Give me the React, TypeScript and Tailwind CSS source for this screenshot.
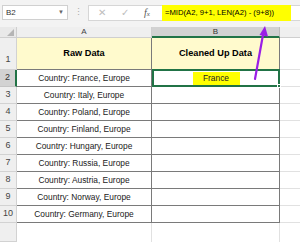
const rows = [
  "Country: France, Europe",
  "Country: Italy, Europe",
  "Country: Poland, Europe",
  "Country: Finland, Europe",
  "Country: Hungary, Europe",
  "Country: Russia, Europe",
  "Country: Austria, Europe",
  "Country: Norway, Europe",
  "Country: Germany, Europe",
];

const font = { fontFamily: '"Liberation Sans", Arial, sans-serif' };

const FormulaBar = () => (
  <div className="h-[27px] bg-[#f3f3f3] flex items-start pt-[5px] relative">
    <div className="ml-[2px] w-[66px] h-[15px] bg-white border border-[#d0d0d0] flex items-center justify-between px-[3px]">
      <span className="text-[8px] text-[#333]">B2</span>
      <span className="text-[6px] text-[#666]">▼</span>
    </div>
    <div className="w-[20px] h-[15px] flex items-center justify-center text-[9px] text-[#aaa]">⋮</div>
    <div className="flex-1 h-[16px] bg-white border-l border-y border-[#d6d6d6] flex items-center">
      <span className="ml-[9px] w-[10px] text-[10px] text-[#bdbdbd] leading-none">✕</span>
      <span className="ml-[13px] w-[10px] text-[10px] text-[#bdbdbd] leading-none">✓</span>
      <span
        className="ml-[13px] text-[10px] italic text-[#555] leading-none"
        style={{ fontFamily: '"Liberation Serif", serif' }}
      >
        f<span className="text-[7px]">x</span>
      </span>
      <div className="ml-[12px] w-[129px] shrink-0 h-[16px] bg-[#ffff00] flex items-center pl-[3px]">
        <span className="text-[7.7px] text-black whitespace-nowrap">=MID(A2, 9+1, LEN(A2) - (9+8))</span>
      </div>
    </div>
  </div>
);

const ColumnHeaders = () => (
  <div className="flex h-[11px]">
    <div className="w-[17px] bg-[#e9e9e9] border-r border-b border-[#cfcfcf] relative">
      <div
        className="absolute right-[2px] bottom-[1px] w-[7px] h-[7px] bg-[#b5b5b5]"
        style={{ clipPath: "polygon(100% 0, 100% 100%, 0 100%)" }}
      />
    </div>
    <div className="w-[135px] bg-[#efefef] border-r border-b border-[#cfcfcf] flex items-center justify-center text-[8px] text-[#444]">
      A
    </div>
    <div className="w-[128px] bg-[#d2d2d2] border-r border-[#bdbdbd] border-b-2 border-b-[#217346] flex items-center justify-center text-[8px] text-[#333]">
      B
    </div>
    <div className="flex-1 bg-[#efefef] border-b border-[#cfcfcf]" />
  </div>
);

const RowHeader = ({ n, active }: { n?: number; active?: boolean }) => (
  <div
    className={
      active
        ? "w-[17px] bg-[#d2d2d2] border-r-2 border-r-[#217346] border-b border-b-[#c4c4c4] flex items-center justify-center text-[9px] text-[#333]"
        : "w-[17px] bg-[#efefef] border-r border-b border-[#d2d2d2] flex items-center justify-center text-[9px] text-[#444]"
    }
  >
    {n}
  </div>
);

const App = () => {
  return (
    <div className="w-[300px] h-[242px] bg-white overflow-hidden relative" style={font}>
      <FormulaBar />
      <ColumnHeaders />

      <div className="flex h-[32px]">
        <div className="w-[17px] bg-[#efefef] border-r border-b border-[#d2d2d2] flex items-end justify-center pb-[3px] text-[9px] text-[#444]">
          1
        </div>
        <div className="w-[135px] bg-[#fffacd] border-r border-b border-[#7a7a7a] flex items-center justify-center text-[9.2px] font-bold text-black">
          Raw Data
        </div>
        <div className="w-[128px] bg-[#fffacd] border-r border-b border-[#7a7a7a] flex items-center justify-center text-[9.2px] font-bold text-black">
          Cleaned Up Data
        </div>
        <div className="flex-1 border-b border-[#e1e1e1]" />
      </div>

      {rows.map((text, i) => (
        <div key={text} className="flex h-[17px]">
          <RowHeader n={i + 2} active={i === 0} />
          <div className="w-[135px] border-r border-b border-[#7a7a7a] flex items-center justify-center text-[8.4px] text-[#222] whitespace-nowrap">
            {text}
          </div>
          {i === 0 ? (
            <div className="w-[128px] border-2 border-[#217346] -mt-px flex items-center justify-center relative">
              <div className="w-[47px] h-[13px] bg-[#ffff00] flex items-center justify-center text-[8.4px] text-[#222]">
                France
              </div>
              <div className="absolute -right-[3px] -bottom-[3px] w-[4px] h-[4px] bg-[#217346] border border-white" />
            </div>
          ) : (
            <div className="w-[128px] border-r border-b border-[#7a7a7a]" />
          )}
          <div className="flex-1 border-b border-[#e1e1e1]" />
        </div>
      ))}

      <div className="flex h-[19px]">
        <RowHeader />
        <div className="w-[135px] border-r border-[#e1e1e1]" />
        <div className="w-[128px] border-r border-[#e1e1e1]" />
        <div className="flex-1" />
      </div>

      <svg className="absolute left-0 top-0 pointer-events-none" width="300" height="242" viewBox="0 0 300 242">
        <line x1="255" y1="79" x2="263.5" y2="32" stroke="#9a1ee6" strokeWidth="2.2" strokeLinecap="round" />
        <polygon points="265,26 259.5,35 268,36.5" fill="#9a1ee6" />
      </svg>
    </div>
  );
};

export default App;
